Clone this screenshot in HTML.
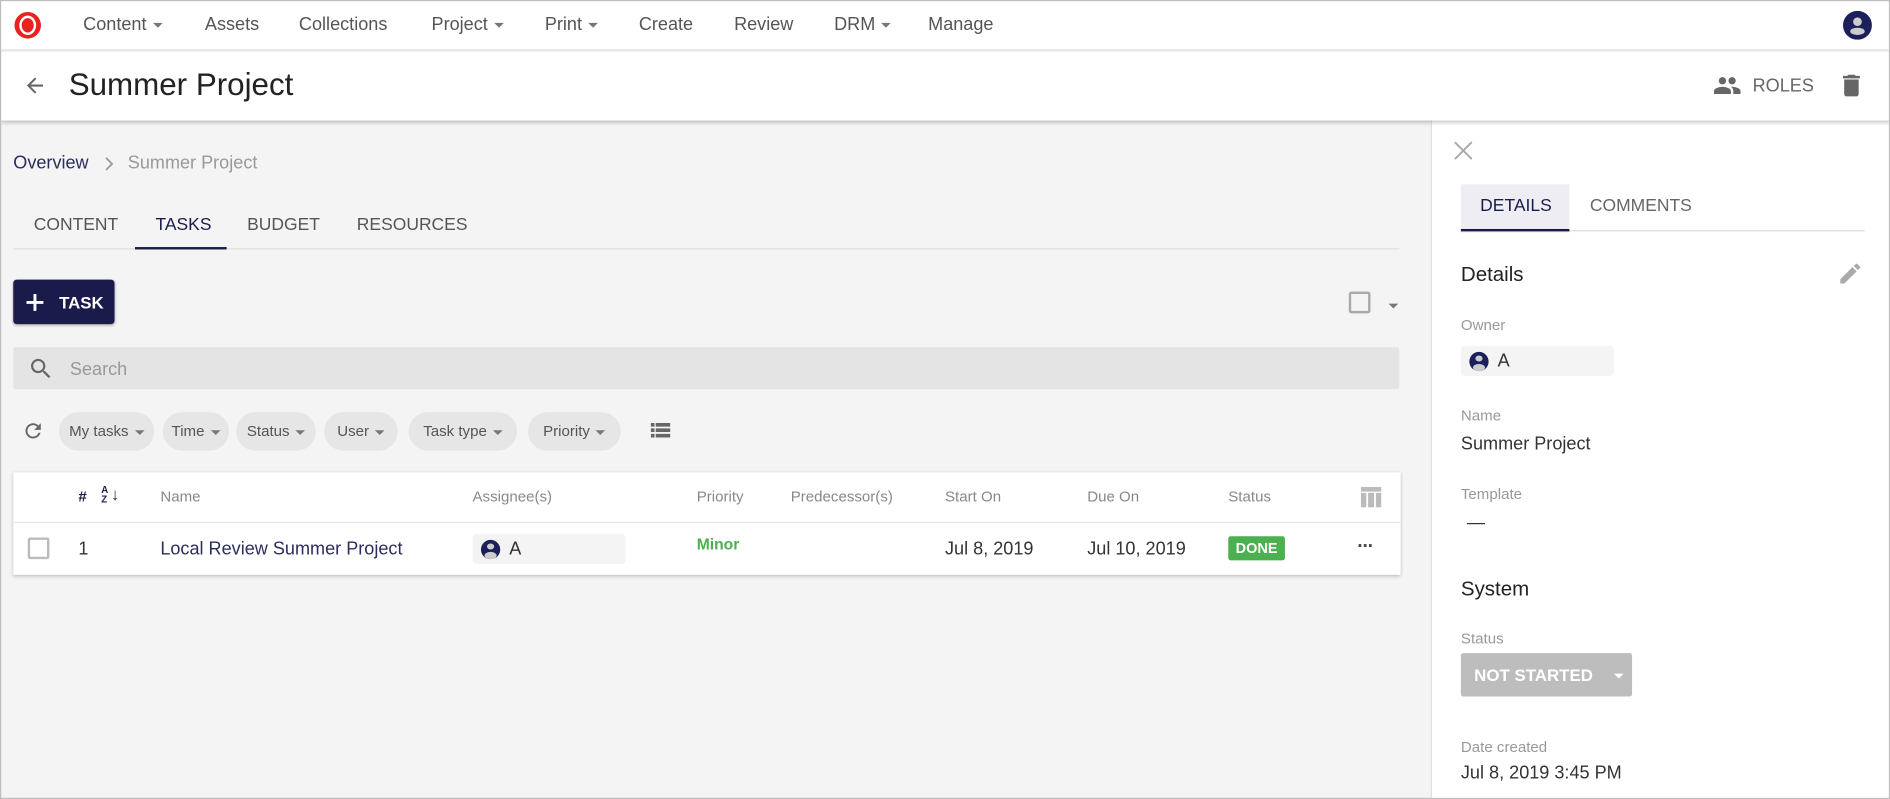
<!DOCTYPE html>
<html><head><meta charset="utf-8">
<style>
*{box-sizing:border-box;margin:0;padding:0}
html,body{width:1890px;height:799px;overflow:hidden;background:#fff;font-family:"Liberation Sans",Arial,sans-serif}
#w{position:absolute;left:0;top:0;width:1568px;height:663px;transform:scale(1.20536,1.2051);transform-origin:0 0;border:1px solid #bdbdbd;overflow:hidden;background:#f4f4f4}
.a{position:absolute;white-space:nowrap}
.nav{color:#555;font-size:15px;top:11px}
.car{display:inline-block;width:0;height:0;border-left:4px solid transparent;border-right:4px solid transparent;border-top:4px solid #777;vertical-align:middle;margin-left:5px}
.tab{font-size:14.5px;color:#555;top:178px}
.chip{position:absolute;top:341px;height:32px;border-radius:16px;background:#e6e6e6;color:#555;font-size:12.5px;line-height:32px;text-align:center}
.th{font-size:12.5px;color:#888;top:404px}
.lab{font-size:12.5px;color:#999;left:24px}
.av{display:inline-block;width:16px;height:16px;border-radius:50%;background:#1b1f5a;position:relative;vertical-align:middle;overflow:hidden}
.av:before{content:"";position:absolute;left:5px;top:3px;width:6px;height:5px;border-radius:50%;background:#ccc}
.av:after{content:"";position:absolute;left:3px;top:10px;width:10px;height:6px;border-radius:50%;background:#ccc}
</style></head><body><div id="w">
<div class="a" style="left:0;top:0;width:1568px;height:41px;background:#fff;border-bottom:1px solid #ddd"></div>
<div class="a" style="left:11px;top:9px;width:22px;height:22px;border-radius:50%;background:#e8231e"></div>
<div class="a" style="left:15px;top:12px;width:14px;height:16px;border-radius:50%;border:2px solid #fff"></div>
<div class="a nav" style="left:68px">Content<span class="car"></span></div>
<div class="a nav" style="left:169px">Assets</div>
<div class="a nav" style="left:247px">Collections</div>
<div class="a nav" style="left:357px">Project<span class="car"></span></div>
<div class="a nav" style="left:451px">Print<span class="car"></span></div>
<div class="a nav" style="left:529px">Create</div>
<div class="a nav" style="left:608px">Review</div>
<div class="a nav" style="left:691px">DRM<span class="car"></span></div>
<div class="a nav" style="left:769px">Manage</div>
<svg class="a" style="left:1528px;top:8px" width="24" height="24" viewBox="0 0 24 24"><circle cx="12" cy="12" r="12" fill="#1b1f5a"/><circle cx="12" cy="9" r="3.6" fill="#ccc"/><ellipse cx="12" cy="17" rx="6" ry="3" fill="#ccc"/></svg>
<div class="a" style="left:0;top:42px;width:1568px;height:57px;background:#fff;box-shadow:0 2px 3px rgba(0,0,0,.2);z-index:2">
<svg class="a" style="left:18px;top:18px" width="20" height="20" viewBox="0 0 24 24"><path d="M20 11H7.8l5.6-5.6L12 4l-8 8 8 8 1.4-1.4L7.8 13H20z" fill="#666"/></svg>
<div class="a" style="left:56px;top:12px;font-size:26px;color:#222">Summer Project</div>
<svg class="a" style="left:1420px;top:16px" width="24" height="24" viewBox="0 0 24 24"><path d="M16 11c1.7 0 3-1.3 3-3s-1.3-3-3-3-3 1.3-3 3 1.3 3 3 3zm-8 0c1.7 0 3-1.3 3-3S9.7 5 8 5 5 6.3 5 8s1.3 3 3 3zm0 2c-2.3 0-7 1.2-7 3.5V19h14v-2.5C15 14.2 10.3 13 8 13zm8 0c-.3 0-.6 0-1 .1 1.2.8 2 2 2 3.4V19h6v-2.5c0-2.3-4.7-3.5-7-3.5z" fill="#666"/></svg>
<div class="a" style="left:1453px;top:20px;font-size:15px;color:#666">ROLES</div>
<svg class="a" style="left:1523px;top:16px" width="24" height="24" viewBox="0 0 24 24"><path d="M6 19c0 1.1.9 2 2 2h8c1.1 0 2-.9 2-2V7H6v12zM19 4h-3.5l-1-1h-5l-1 1H5v2h14V4z" fill="#666"/></svg>
</div>
<div class="a" style="left:10px;top:126px;font-size:15px;color:#2b2d5c">Overview</div>
<svg class="a" style="left:84px;top:128px" width="10" height="14" viewBox="0 0 10 14"><path d="M3 2l5 5-5 5" stroke="#999" stroke-width="1.5" fill="none"/></svg>
<div class="a" style="left:105px;top:126px;font-size:15px;color:#999">Summer Project</div>
<div class="a tab" style="left:27px">CONTENT</div>
<div class="a tab" style="left:128px;color:#1a1b4b">TASKS</div>
<div class="a tab" style="left:204px">BUDGET</div>
<div class="a tab" style="left:295px">RESOURCES</div>
<div class="a" style="left:10px;top:205px;width:1150px;height:1px;background:#ddd"></div>
<div class="a" style="left:111px;top:204px;width:76px;height:2px;background:#1a1b4b"></div>
<div class="a" style="left:10px;top:231px;width:84px;height:37px;background:#1a1b4b;border-radius:3px;box-shadow:0 1px 2px rgba(0,0,0,.3)"></div>
<svg class="a" style="left:20px;top:242px" width="16" height="16" viewBox="0 0 16 16"><path d="M8 1v14M1 8h14" stroke="#fff" stroke-width="2.4"/></svg>
<div class="a" style="left:48px;top:242px;font-size:14px;color:#fff;font-weight:bold">TASK</div>
<div class="a" style="left:1118px;top:241px;width:18px;height:18px;border:2px solid #aaa;border-radius:2px"></div>
<div class="a" style="left:1146px;top:244px"><span class="car"></span></div>
<div class="a" style="left:10px;top:287px;width:1150px;height:35px;background:#e4e4e4;border-radius:2px"></div>
<svg class="a" style="left:22px;top:294px" width="22" height="22" viewBox="0 0 24 24"><path d="M15.5 14h-.8l-.3-.3c1-1.1 1.6-2.6 1.6-4.2C16 5.9 13.1 3 9.5 3S3 5.9 3 9.5 5.9 16 9.5 16c1.6 0 3.1-.6 4.2-1.6l.3.3v.8l5 5 1.5-1.5-5-5zm-6 0C7 14 5 12 5 9.5S7 5 9.5 5 14 7 14 9.5 12 14 9.5 14z" fill="#666"/></svg>
<div class="a" style="left:57px;top:297px;font-size:15px;color:#999">Search</div>
<svg class="a" style="left:17px;top:347px" width="19" height="19" viewBox="0 0 24 24"><path d="M17.6 6.4C16.2 4.9 14.2 4 12 4c-4.4 0-8 3.6-8 8s3.6 8 8 8c3.7 0 6.8-2.6 7.7-6h-2.1c-.8 2.3-3 4-5.6 4-3.3 0-6-2.7-6-6s2.7-6 6-6c1.7 0 3.1.7 4.2 1.8L13 11h7V4l-2.4 2.4z" fill="#666"/></svg>
<div class="chip" style="left:48px;width:79px">My tasks<span class="car"></span></div>
<div class="chip" style="left:134px;width:55px">Time<span class="car"></span></div>
<div class="chip" style="left:195px;width:66px">Status<span class="car"></span></div>
<div class="chip" style="left:268px;width:61px">User<span class="car"></span></div>
<div class="chip" style="left:338px;width:90px">Task type<span class="car"></span></div>
<div class="chip" style="left:437px;width:77px">Priority<span class="car"></span></div>
<svg class="a" style="left:538px;top:348px" width="18" height="16" viewBox="0 0 18 16"><path d="M1 2h3v3H1zM5 2h12v3H5zM1 6.5h3v3H1zM5 6.5h12v3H5zM1 11h3v3H1zM5 11h12v3H5z" fill="#666"/></svg>
<div class="a" style="left:10px;top:391px;width:1151px;height:85px;background:#fff;box-shadow:0 1px 3px rgba(0,0,0,.25)"></div>
<div class="a" style="left:10px;top:432px;width:1151px;height:1px;background:#e8e8e8"></div>
<div class="a th" style="left:64px;color:#1a1b4b;font-weight:bold">#</div>
<div class="a" style="left:83px;top:402px;font-size:8px;line-height:8px;color:#1a1b4b;font-weight:bold">A<br>Z</div>
<div class="a" style="left:91px;top:401px;font-size:14px;color:#1a1b4b">&#x2193;</div>
<div class="a th" style="left:132px">Name</div>
<div class="a th" style="left:391px">Assignee(s)</div>
<div class="a th" style="left:577px">Priority</div>
<div class="a th" style="left:655px">Predecessor(s)</div>
<div class="a th" style="left:783px">Start On</div>
<div class="a th" style="left:901px">Due On</div>
<div class="a th" style="left:1018px">Status</div>
<svg class="a" style="left:1128px;top:403px" width="17" height="17" viewBox="0 0 17 17"><path d="M0 0h17v4H0zM0 5h4.5v12H0zM6 5h5v12H6zM12.5 5H17v12h-4.5z" fill="#bbb"/></svg>
<div class="a" style="left:22px;top:445px;width:18px;height:18px;border:2px solid #bbb;border-radius:2px"></div>
<div class="a" style="left:64px;top:446px;font-size:15px;color:#333">1</div>
<div class="a" style="left:132px;top:446px;font-size:15px;color:#2b2d5c">Local Review Summer Project</div>
<div class="a" style="left:391px;top:442px;width:127px;height:25px;background:#f4f4f4;border-radius:3px"></div>
<div class="a" style="left:398px;top:446px;font-size:15px;color:#333"><span class="av"></span>&nbsp; A</div>
<div class="a" style="left:577px;top:443px;font-size:13px;color:#4caf50;font-weight:bold">Minor</div>
<div class="a" style="left:783px;top:446px;font-size:15px;color:#333">Jul 8, 2019</div>
<div class="a" style="left:901px;top:446px;font-size:15px;color:#333">Jul 10, 2019</div>
<div class="a" style="left:1018px;top:444px;width:47px;height:20px;background:#4caf50;border-radius:2px;color:#fff;font-size:12px;font-weight:bold;text-align:center;line-height:20px">DONE</div>
<div class="a" style="left:1125px;top:444px;font-size:16px;color:#444;font-weight:bold;letter-spacing:-1px">&middot;&middot;&middot;</div>
<div class="a" style="left:1186px;top:99px;width:382px;height:564px;background:#fff;border-left:1px solid #e0e0e0">
<svg class="a" style="left:17px;top:16px" width="18" height="18" viewBox="0 0 18 18"><path d="M2 2l14 14M16 2L2 16" stroke="#aaa" stroke-width="1.6"/></svg>
<div class="a" style="left:24px;top:53px;width:90px;height:40px;background:#ededf3"></div>
<div class="a" style="left:24px;top:91px;width:335px;height:1px;background:#ddd"></div>
<div class="a" style="left:24px;top:90px;width:90px;height:2px;background:#1a1b4b"></div>
<div class="a" style="left:40px;top:63px;font-size:14.5px;color:#1a1b4b">DETAILS</div>
<div class="a" style="left:131px;top:63px;font-size:14.5px;color:#666">COMMENTS</div>
<div class="a" style="left:24px;top:118px;font-size:17px;color:#222">Details</div>
<svg class="a" style="left:336px;top:116px" width="22" height="22" viewBox="0 0 24 24"><path d="M3 17.2V21h3.8l11-11-3.8-3.8-11 11zM20.7 7c.4-.4.4-1 0-1.4l-2.3-2.3c-.4-.4-1-.4-1.4 0l-1.8 1.8 3.8 3.8L20.7 7z" fill="#aaa"/></svg>
<div class="a lab" style="top:163px">Owner</div>
<div class="a" style="left:24px;top:187px;width:127px;height:25px;background:#f4f4f4;border-radius:3px"></div>
<div class="a" style="left:31px;top:191px;font-size:15px;color:#333"><span class="av"></span>&nbsp; A</div>
<div class="a lab" style="top:238px">Name</div>
<div class="a" style="left:24px;top:260px;font-size:15px;color:#333">Summer Project</div>
<div class="a lab" style="top:303px">Template</div>
<div class="a" style="left:29px;top:334px;width:15px;height:1px;background:#333"></div>
<div class="a" style="left:24px;top:379px;font-size:17px;color:#222">System</div>
<div class="a lab" style="top:423px">Status</div>
<div class="a" style="left:24px;top:442px;width:142px;height:36px;background:#bdbdbd;border-radius:2px"></div>
<div class="a" style="left:35px;top:452px;font-size:14px;color:#fff;font-weight:bold">NOT STARTED</div>
<div class="a" style="left:146px;top:452px"><span class="car" style="border-top-color:#fff"></span></div>
<div class="a lab" style="top:513px">Date created</div>
<div class="a" style="left:24px;top:533px;font-size:15px;color:#333">Jul 8, 2019 3:45 PM</div>
</div>
</div></body></html>
